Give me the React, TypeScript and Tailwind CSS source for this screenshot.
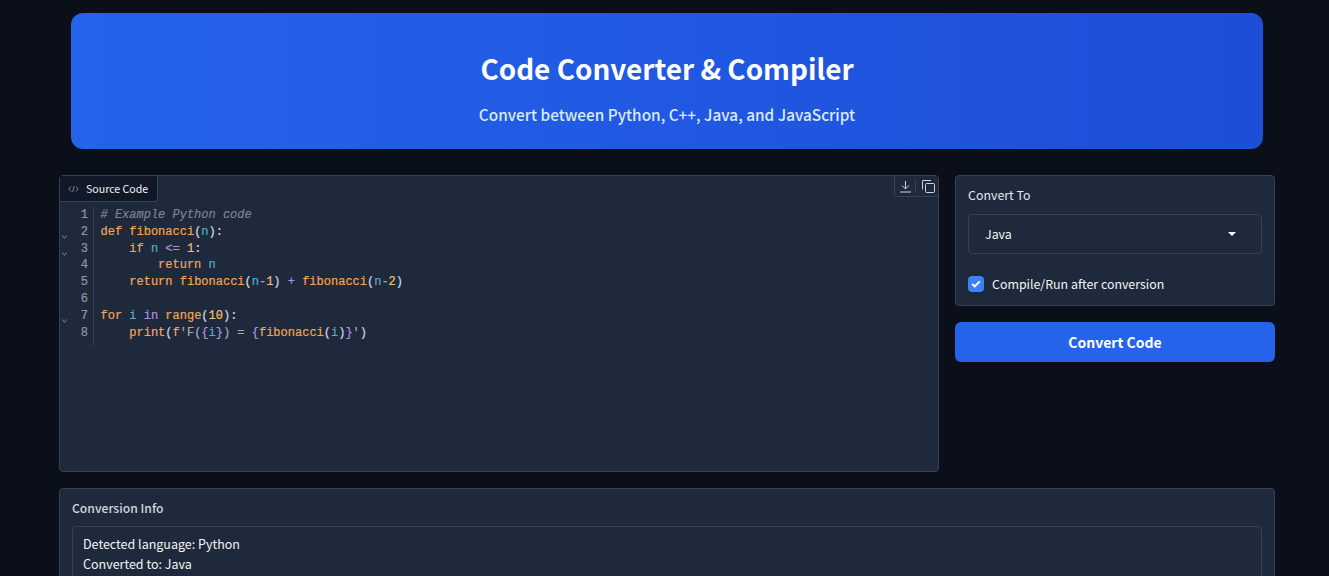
const SANS = 'font-["Noto_Sans_CJK_SC","Noto_Sans",sans-serif]';

const kw = 'text-[#f2a65a]';
const fn = 'text-[#f6a552]';
const va = 'text-[#5ea8cc]';
const pu = 'text-[#d3d8e0]';
const op = 'text-[#b58fe0]';
const nu = 'text-[#f4bd7e]';
const st = 'text-[#a3adbb]';

const lines: { n: number; fold?: boolean; code: [string, string][] }[] = [
  { n: 1, code: [['# Example Python code', 'italic text-[#7b8494]']] },
  {
    n: 2,
    fold: true,
    code: [
      ['def ', kw],
      ['fibonacci', fn],
      ['(', pu],
      ['n', va],
      ['):', pu],
    ],
  },
  {
    n: 3,
    fold: true,
    code: [
      ['    ', pu],
      ['if ', kw],
      ['n ', va],
      ['<= ', op],
      ['1', nu],
      [':', pu],
    ],
  },
  {
    n: 4,
    code: [
      ['        ', pu],
      ['return ', kw],
      ['n', va],
    ],
  },
  {
    n: 5,
    code: [
      ['    ', pu],
      ['return ', kw],
      ['fibonacci', fn],
      ['(', pu],
      ['n', va],
      ['-', op],
      ['1', nu],
      [') ', pu],
      ['+ ', op],
      ['fibonacci', fn],
      ['(', pu],
      ['n', va],
      ['-', op],
      ['2', nu],
      [')', pu],
    ],
  },
  { n: 6, code: [] },
  {
    n: 7,
    fold: true,
    code: [
      ['for ', kw],
      ['i ', va],
      ['in ', op],
      ['range', fn],
      ['(', pu],
      ['10', nu],
      ['):', pu],
    ],
  },
  {
    n: 8,
    code: [
      ['    ', pu],
      ['print', fn],
      ['(', pu],
      ['f', kw],
      ["'F(", st],
      ['{', op],
      ['i', va],
      ['}', op],
      [') = ', st],
      ['{', op],
      ['fibonacci', fn],
      ['(', pu],
      ['i', va],
      [')', pu],
      ['}', op],
      ["'", st],
      [')', pu],
    ],
  },
];

const CodeEditor = () => (
  <div className="flex items-start pt-[5px] font-['Liberation_Mono',monospace] text-[12px] leading-[16.8px] [-webkit-text-stroke:0.2px]">
    <div className="w-[34px] border-r border-[#334155] pb-[5px]">
      {lines.map((l) => (
        <div key={l.n} className="relative h-[16.8px] pr-[5px] text-right text-[#8e99a9]">
          {l.fold && (
            <svg
              width="5"
              height="4"
              viewBox="0 0 5 4"
              fill="none"
              stroke="#8b95a5"
              strokeWidth="0.8"
              className="absolute top-[11px] left-[2px]"
            >
              <path d="M0.4 0.4 L2.5 3.4 L4.6 0.4" />
            </svg>
          )}
          {l.n}
        </div>
      ))}
    </div>
    <div className="flex-1 pl-[6.5px]">
      {lines.map((l) => (
        <div key={l.n} className="h-[16.8px] whitespace-pre">
          {l.code.map(([t, c], i) => (
            <span key={i} className={c}>
              {t}
            </span>
          ))}
        </div>
      ))}
    </div>
  </div>
);

const App = () => {
  return (
    <div className={`h-screen overflow-hidden bg-[#0b0f19] text-[#f3f4f6] ${SANS}`}>
      <div className="pt-[13px] pr-[54px] pl-[59px]">
        <div className="mx-[12px] flex h-[136px] flex-col items-center rounded-[12px] bg-gradient-to-r from-[#2563eb] to-[#1d4ed8] pt-[31px]">
          <h1 className="text-[27.9px] leading-[48px] font-semibold text-white">
            Code Converter &amp; Compiler
          </h1>
          <p className="mt-[9px] text-[15.35px] leading-[26px] font-medium text-[#dbeafe]">
            Convert between Python, C++, Java, and JavaScript
          </p>
        </div>

        <div className="mt-[26px] flex gap-[16px]">
          <div className="relative flex h-[297px] w-[880px] flex-col rounded-[4px] border border-[#374151] bg-[#1e293b]">
            <div className="flex h-[26px]">
              <div className="flex h-[26px] items-center gap-[7px] rounded-br-[4px] border-r border-b border-[#374151] bg-[#111827] pr-[9px] pl-[8px] text-[10.6px] text-[#f3f4f6]">
                <svg width="11" height="8" viewBox="0 0 11 8" fill="none" stroke="#9ca3af" strokeWidth="0.8">
                  <path d="M3 1.5 L0.8 4 L3 6.5" />
                  <path d="M8 1.5 L10.2 4 L8 6.5" />
                  <path d="M6.3 1 L4.7 7" />
                </svg>
                Source Code
              </div>
            </div>
            <div className="absolute top-0 right-0 flex h-[21px] items-center rounded-bl-[4px] border-b border-l border-[#374151] bg-[#1e293b]">
              <div className="flex w-[21px] justify-center border-r border-[#374151]">
                <svg width="13" height="13" viewBox="0 0 13 13" fill="none" stroke="#d1d5db" strokeWidth="1">
                  <path d="M6.5 1 V8.5" />
                  <path d="M3 5.5 L6.5 9 L10 5.5" />
                  <path d="M1 12 H12" />
                </svg>
              </div>
              <div className="flex w-[22px] justify-center pl-[2px]">
                <svg width="13" height="13" viewBox="0 0 13 13" fill="none" stroke="#d1d5db" strokeWidth="1">
                  <rect x="3.5" y="3.5" width="9" height="9" rx="1" />
                  <path d="M0.5 9.5 V1 a0.5 0.5 0 0 1 0.5 -0.5 H9" />
                </svg>
              </div>
            </div>
            <CodeEditor />
          </div>

          <div className="flex w-[320px] flex-col gap-[16px]">
            <div className="h-[131px] rounded-[4px] border border-[#374151] bg-[#1e293b] px-[12px] pt-[9px]">
              <div className="text-[12.4px] leading-[20px] text-[#e5e7eb]">Convert To</div>
              <div className="mt-[9px] flex h-[40px] items-center justify-between rounded-[4px] border border-[#374151] bg-[#1e293b] pr-[25px] pl-[16px] text-[12.4px] text-[#f3f4f6]">
                Java
                <span className="h-0 w-0 border-x-[4.5px] border-t-[4.5px] border-x-transparent border-t-white" />
              </div>
              <label className="mt-[20px] flex items-center gap-[8px] text-[12.4px] leading-[20px] text-[#f3f4f6]">
                <span className="flex h-[16px] w-[16px] items-center justify-center rounded-[4px] bg-[#3b82f6]">
                  <svg width="10" height="8" viewBox="0 0 10 8" fill="none" stroke="white" strokeWidth="2">
                    <path d="M1.2 4 L3.8 6.4 L8.8 1.4" />
                  </svg>
                </span>
                Compile/Run after conversion
              </label>
            </div>
            <button className="h-[40px] rounded-[6px] bg-[#2563eb] text-[14px] font-semibold text-white">
              Convert Code
            </button>
          </div>
        </div>

        <div className="mt-[16px] rounded-[4px] border border-[#374151] bg-[#1e293b] px-[12px] pt-[9px] pb-[12px]">
          <div className="text-[12.2px] leading-[20px] font-medium text-[#d1d5db]">Conversion Info</div>
          <div className="mt-[8px] rounded-[4px] border border-[#374151] px-[10px] py-[7px] text-[12.5px] leading-[20px] text-[#f3f4f6]">
            <div>Detected language: Python</div>
            <div>Converted to: Java</div>
          </div>
        </div>
      </div>
    </div>
  );
};

export default App;
